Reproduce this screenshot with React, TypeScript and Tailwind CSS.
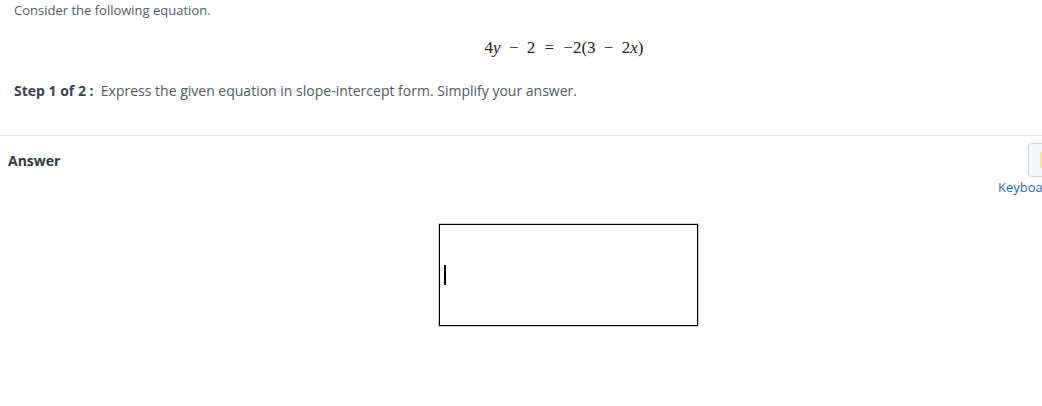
import React from "react";

export default function App() {
  return (
    <div className="w-[1042px] h-[406px] overflow-hidden bg-white" style={{ fontFamily: '"Open Sans", sans-serif' }}>
      <div className="w-[1100px]">
        <div className="pl-[14px] pt-[1px] text-[13px] leading-[18px] text-[#555a63]">Consider the following equation.</div>
        <div className="flex justify-center w-[1128px] pt-[19px] h-[60px] text-[17px] leading-[20px] text-[#222]" style={{ fontFamily: '"Liberation Serif", serif' }}>
          <span>4<i>y</i> <span className="px-[4px]">−</span> 2 <span className="px-[5px]">=</span> −2(3 <span className="px-[4px]">−</span> 2<i>x</i>)</span>
        </div>
        <div className="pl-[14px] pt-[3px] text-[14px] leading-[18px] text-[#555a63]">
          <span className="font-bold text-[#3d4350]">Step 1 of 2 :</span>&nbsp; Express the given equation in slope-intercept form. Simplify your answer.
        </div>
        <div className="mt-[35px] border-t border-[#e1e1e1] w-[1042px]" />
        <div className="flex">
          <div className="pl-[8px] pt-[16px] text-[14px] font-bold text-[#333a45] leading-[18px]">Answer</div>
          <div className="ml-auto mr-[14px] flex flex-col items-center pt-[7px] w-[90px]">
            <div className="w-[40px] h-[34px] border border-[#cfd6de] rounded-[4px] bg-[#f7f9fb] flex items-center justify-center self-end mr-[18px]">
              <div className="w-[2px] h-[16px] bg-[#f6e3b0] ml-[-14px]" />
            </div>
            <div className="self-start pl-[2px] pt-[1px] text-[13px] text-[#2c6bb6] leading-[18px]">Keyboard</div>
          </div>
        </div>
        <div className="flex justify-start pl-[438px] pt-[27px]">
          <div className="w-[261px] h-[104px] border border-[#cccccc] p-0">
            <div className="w-full h-full border-[1.5px] border-black flex items-center pl-[4px]">
              <div className="w-[1.5px] h-[20px] bg-black" />
            </div>
          </div>
        </div>
      </div>
    </div>
  );
}
